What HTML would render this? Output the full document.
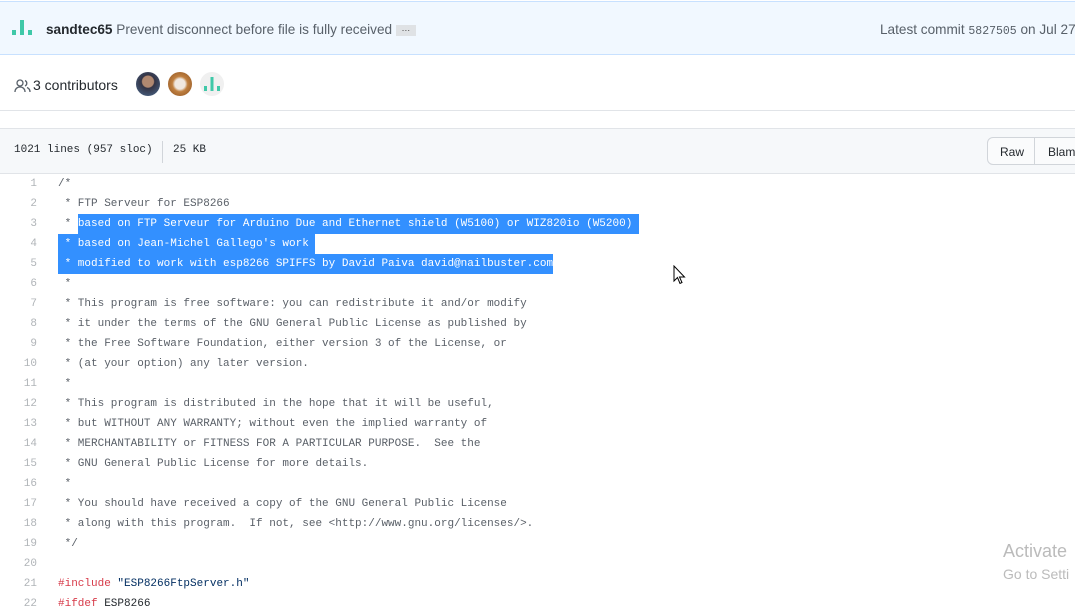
<!DOCTYPE html>
<html><head><meta charset="utf-8"><style>
body{margin:0;width:1075px;height:605px;overflow:hidden;background:#fff;font-family:"Liberation Sans",sans-serif;position:relative}
.abs{position:absolute}
.commit{left:0;top:1px;width:1075px;height:54px;background:#f1f8ff;border-top:1px solid #c8e1ff;border-bottom:1px solid #c8e1ff;box-sizing:border-box}
.contrib{left:0;top:55px;width:1075px;height:56px;border-bottom:1px solid #e1e4e8;box-sizing:border-box}
.fhead{left:0;top:128px;width:1075px;height:46px;background:#f6f8fa;border-top:1px solid #e1e4e8;border-bottom:1px solid #e1e4e8;box-sizing:border-box}
.mono{font-family:"Liberation Mono",monospace}
.ln{position:absolute;left:0;width:37px;text-align:right;color:#b0b4b8;font-size:11px;line-height:20px;font-family:"Liberation Mono",monospace}
.cd{position:absolute;left:58px;font-size:11px;line-height:20px;font-family:"Liberation Mono",monospace;color:#5a6068;white-space:pre}
.hl{background:#3390ff;color:#fff;display:inline-block;height:20px}
</style></head><body>
<div class="abs commit">
  <svg class="abs" style="left:10px;top:16px" width="24" height="20"><rect x="2" y="12" width="4" height="5" fill="#3fc8a8"/><rect x="10" y="2" width="4" height="15" fill="#3fc8a8"/><rect x="18" y="12" width="4" height="5" fill="#3fc8a8"/></svg>
  <div class="abs" style="left:46px;top:20px;font-size:13.6px;color:#586069;white-space:nowrap"><b style="color:#24292e">sandtec65</b> Prevent disconnect before file is fully received <span style="display:inline-block;background:#dfe2e5;width:20px;height:11px;font-size:9px;line-height:7px;text-align:center;color:#444;vertical-align:middle">…</span></div>
  <div class="abs" style="left:880px;top:20px;font-size:13.6px;color:#586069;white-space:nowrap">Latest commit <span class="mono" style="font-size:11.5px">5827505</span> on Jul 27</div>
</div>
<div class="abs contrib">
  <svg class="abs" style="left:14px;top:24px" width="18" height="14" fill="none" stroke="#586069" stroke-width="1.3"><circle cx="6" cy="4" r="3"/><path d="M1 13c0-3 2-5 5-5s5 2 5 5M11 1.5a3 3 0 010 5.5M13 8.5c2 .8 3 2.5 3 4.5"/></svg>
  <div class="abs" style="left:33px;top:22px;font-size:14px;color:#24292e">3 contributors</div>
  <div class="abs" style="left:136px;top:17px;width:24px;height:24px;border-radius:50%;background:radial-gradient(circle at 50% 40%,#b08870 0 30%,#334 35%,#4a6a90 100%)"></div>
  <div class="abs" style="left:168px;top:17px;width:24px;height:24px;border-radius:50%;background:radial-gradient(circle,#f0e8e0 0 30%,#c08040 45%,#8a5020 100%)"></div>
  <div class="abs" style="left:200px;top:17px;width:24px;height:24px;border-radius:50%;background:#f0f0f0"><svg width="24" height="24"><rect x="4" y="14" width="3" height="5" fill="#3fc8a8"/><rect x="10.5" y="5" width="3" height="14" fill="#3fc8a8"/><rect x="17" y="14" width="3" height="5" fill="#3fc8a8"/></svg></div>
</div>
<div class="abs fhead">
  <div class="abs mono" style="left:14px;top:15px;font-size:11px;color:#24292e">1021 lines (957 sloc)</div>
  <div class="abs" style="left:162px;top:12px;width:1px;height:22px;background:#d1d5da"></div>
  <div class="abs mono" style="left:173px;top:15px;font-size:11px;color:#24292e">25 KB</div>
  <div class="abs" style="left:987px;top:8px;width:100px;height:28px;border:1px solid #d1d5da;border-radius:6px;background:#fafbfc;box-sizing:border-box"></div>
  <div class="abs" style="left:1034px;top:8px;width:1px;height:28px;background:#d1d5da"></div>
  <div class="abs" style="left:1000px;top:16px;font-size:12px;color:#24292e">Raw</div>
  <div class="abs" style="left:1048px;top:16px;font-size:12px;color:#24292e">Blame</div>
</div>
<div class="abs" style="left:0;top:174px;width:1075px;height:431px">
<div class="ln" style="top:0px">1</div><div class="cd" style="top:0px">/*</div>
<div class="ln" style="top:20px">2</div><div class="cd" style="top:20px"> * FTP Serveur for ESP8266</div>
<div class="ln" style="top:40px">3</div><div class="cd" style="top:40px"> * <span class="hl">based on FTP Serveur for Arduino Due and Ethernet shield (W5100) or WIZ820io (W5200) </span></div>
<div class="ln" style="top:60px">4</div><div class="cd" style="top:60px"><span class="hl"> * based on Jean-Michel Gallego's work </span></div>
<div class="ln" style="top:80px">5</div><div class="cd" style="top:80px"><span class="hl"> * modified to work with esp8266 SPIFFS by David Paiva david@nailbuster.com</span></div>
<div class="ln" style="top:100px">6</div><div class="cd" style="top:100px"> *</div>
<div class="ln" style="top:120px">7</div><div class="cd" style="top:120px"> * This program is free software: you can redistribute it and/or modify</div>
<div class="ln" style="top:140px">8</div><div class="cd" style="top:140px"> * it under the terms of the GNU General Public License as published by</div>
<div class="ln" style="top:160px">9</div><div class="cd" style="top:160px"> * the Free Software Foundation, either version 3 of the License, or</div>
<div class="ln" style="top:180px">10</div><div class="cd" style="top:180px"> * (at your option) any later version.</div>
<div class="ln" style="top:200px">11</div><div class="cd" style="top:200px"> *</div>
<div class="ln" style="top:220px">12</div><div class="cd" style="top:220px"> * This program is distributed in the hope that it will be useful,</div>
<div class="ln" style="top:240px">13</div><div class="cd" style="top:240px"> * but WITHOUT ANY WARRANTY; without even the implied warranty of</div>
<div class="ln" style="top:260px">14</div><div class="cd" style="top:260px"> * MERCHANTABILITY or FITNESS FOR A PARTICULAR PURPOSE.  See the</div>
<div class="ln" style="top:280px">15</div><div class="cd" style="top:280px"> * GNU General Public License for more details.</div>
<div class="ln" style="top:300px">16</div><div class="cd" style="top:300px"> *</div>
<div class="ln" style="top:320px">17</div><div class="cd" style="top:320px"> * You should have received a copy of the GNU General Public License</div>
<div class="ln" style="top:340px">18</div><div class="cd" style="top:340px"> * along with this program.  If not, see &lt;http://www.gnu.org/licenses/&gt;.</div>
<div class="ln" style="top:360px">19</div><div class="cd" style="top:360px"> */</div>
<div class="ln" style="top:380px">20</div>
<div class="ln" style="top:400px">21</div><div class="cd" style="top:400px;color:#24292e"><span style="color:#d73a49">#include</span> <span style="color:#032f62">"ESP8266FtpServer.h"</span></div>
<div class="ln" style="top:420px">22</div><div class="cd" style="top:420px;color:#24292e"><span style="color:#d73a49">#ifdef</span> ESP8266</div>
</div>
<svg class="abs" style="left:673px;top:265px" width="13" height="20"><path d="M1 1v15l3.5-3.5 2.5 6 2-1-2.5-5.5h5z" fill="#fff" stroke="#000" stroke-width="1"/></svg>
<div class="abs" style="left:1003px;top:541px;font-size:18px;color:#bbb;white-space:nowrap">Activate</div>
<div class="abs" style="left:1003px;top:566px;font-size:14px;color:#bbb;white-space:nowrap">Go to Setti</div>
</body></html>
